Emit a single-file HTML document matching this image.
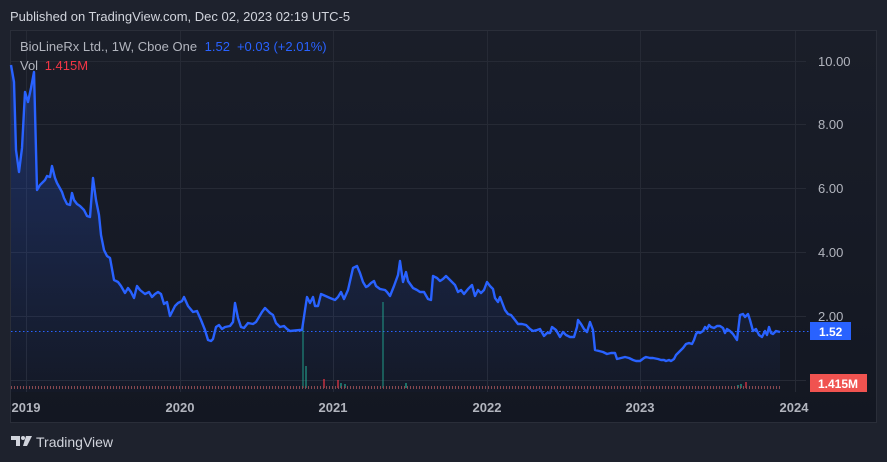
<!DOCTYPE html>
<html><head><meta charset="utf-8"><style>
html,body{margin:0;padding:0;background:#1e222d;width:887px;height:462px;overflow:hidden}
svg{display:block;font-family:"Liberation Sans",sans-serif}
</style></head><body>
<svg width="887" height="462" viewBox="0 0 887 462" xmlns="http://www.w3.org/2000/svg">
<defs>
<linearGradient id="bg" x1="0" y1="0" x2="0" y2="1"><stop offset="0" stop-color="#1a1e29"/><stop offset="1" stop-color="#131722"/></linearGradient>
<linearGradient id="ar" x1="0" y1="0" x2="0" y2="1"><stop offset="0" stop-color="#2962ff" stop-opacity="0.28"/><stop offset="1" stop-color="#2962ff" stop-opacity="0.02"/></linearGradient>
</defs>
<rect width="887" height="462" fill="#1e222d"/>
<text x="10" y="21" font-size="13" fill="#d1d4dc">Published on TradingView.com, Dec 02, 2023 02:19 UTC-5</text>
<rect x="10.5" y="30.5" width="866" height="392" fill="url(#bg)" stroke="#2a2e39"/>
<g stroke="#262a35" stroke-width="1">
<line x1="11" y1="61.5" x2="806" y2="61.5"/><line x1="11" y1="124.5" x2="806" y2="124.5"/>
<line x1="11" y1="188.5" x2="806" y2="188.5"/><line x1="11" y1="252.5" x2="806" y2="252.5"/>
<line x1="11" y1="316.5" x2="806" y2="316.5"/><line x1="11" y1="380.5" x2="806" y2="380.5"/>
<line x1="26.5" y1="31" x2="26.5" y2="392"/><line x1="180.5" y1="31" x2="180.5" y2="392"/>
<line x1="333.5" y1="31" x2="333.5" y2="392"/><line x1="487.5" y1="31" x2="487.5" y2="392"/>
<line x1="640.5" y1="31" x2="640.5" y2="392"/><line x1="795.5" y1="31" x2="795.5" y2="392"/>
</g>
<path fill="url(#ar)" stroke="none" d="M11,65 L14,82 L16,150 L19,172 L22,148 L25,92 L28,102 L31,88 L34,72 L37,190 L40,185 L43,182 L45,180 L47,176 L50,177 L52,166 L55,178 L57,183 L62,192 L64,198 L67,204 L70,205 L72,193 L74,200 L77,204 L80,206 L84,210 L87,216 L90,217 L93,178 L96,200 L99,215 L101,235 L104,250 L107,256 L110,258 L114,280 L118,282 L121,286 L125,293 L128,288 L131,292 L134,298 L137,286 L140,290 L145,294 L149,292 L152,297 L155,294 L158,292 L161,294 L164,304 L167,302 L170,316 L175,306 L178,303 L182,301 L184,297 L188,306 L193,312 L197,311 L201,320 L205,330 L208,340 L211,341 L213,339 L216,327 L219,325 L222,329 L225,327 L230,326 L233,322 L235,303 L238,318 L241,327 L244,328 L248,323 L253,324 L256,322 L262,312 L265,308 L270,313 L273,315 L276,323 L280,327 L284,326 L287,329 L290,331 L300,330 L302,330 L305,310 L307,297 L310,303 L313,297 L315,306 L318,306 L321,294 L330,298 L335,300 L338,297 L341,292 L344,299 L348,290 L353,268 L357,266 L360,273 L363,282 L366,287 L368,286 L371,283 L374,281 L376,286 L380,289 L385,290 L387,292 L390,296 L394,286 L398,275 L400,261 L403,282 L406,272 L408,281 L413,288 L417,290 L420,292 L424,292 L428,299 L431,300 L433,276 L437,278 L440,281 L443,279 L446,276 L450,280 L455,285 L458,292 L461,290 L464,294 L468,289 L472,285 L475,296 L478,290 L481,293 L484,290 L487,282 L490,286 L493,289 L495,298 L498,302 L500,297 L505,310 L508,314 L511,315 L515,320 L518,324 L522,324 L526,325 L530,329 L533,331 L537,330 L540,329 L544,336 L547,333 L550,333 L552,327 L556,330 L560,337 L563,332 L566,335 L570,337 L574,337 L577,327 L578,320 L581,324 L584,329 L587,332 L590,322 L593,330 L595,350 L599,351 L603,352 L607,354 L611,353 L615,353 L617,359 L621,358 L625,357 L629,358 L633,360 L636,361 L640,361 L644,358 L646,357 L650,358 L653,358 L658,359 L661,360 L664,360 L666,361 L669,360 L671,361 L674,359 L676,355 L679,352 L683,348 L686,344 L689,343 L692,344 L694,340 L696,334 L698,332 L700,333 L703,331 L705,327 L707,329 L709,325 L711,327 L714,328 L717,326 L720,326 L723,328 L725,333 L727,329 L730,331 L733,334 L737,340 L740,315 L743,314 L745,317 L748,314 L750,320 L753,331 L756,329 L759,335 L762,337 L765,331 L767,335 L769,327 L771,333 L773,334 L776,331 L780,332 L780,392 L11,392 Z"/>
<line x1="11" y1="331.5" x2="810" y2="331.5" stroke="#2962ff" stroke-dasharray="1.5 2.5" stroke-width="1"/>
<g stroke-width="1.5">
<line x1="303" y1="388" x2="303" y2="325" stroke="#22ab94" stroke-opacity="0.6"/>
<line x1="306" y1="388" x2="306" y2="366" stroke="#22ab94" stroke-opacity="0.7"/>
<line x1="383" y1="388" x2="383" y2="302" stroke="#22ab94" stroke-opacity="0.6"/>
<line x1="324" y1="388" x2="324" y2="379" stroke="#f23645" stroke-opacity="0.8"/>
<line x1="338" y1="388" x2="338" y2="380" stroke="#f23645" stroke-opacity="0.8"/>
<line x1="341" y1="388" x2="341" y2="383" stroke="#22ab94" stroke-opacity="0.8"/>
<line x1="345" y1="388" x2="345" y2="384" stroke="#22ab94" stroke-opacity="0.8"/>
<line x1="406" y1="388" x2="406" y2="383" stroke="#22ab94" stroke-opacity="0.8"/>
<line x1="746" y1="388" x2="746" y2="382" stroke="#f23645" stroke-opacity="0.8"/>
<line x1="741" y1="388" x2="741" y2="384" stroke="#22ab94" stroke-opacity="0.8"/>
<line x1="738" y1="388" x2="738" y2="385" stroke="#22ab94" stroke-opacity="0.8"/>
</g>
<line x1="11" y1="387.5" x2="780" y2="387.5" stroke="#8a4a50" stroke-dasharray="1 2" stroke-width="3"/>
<path fill="none" stroke="#2962ff" stroke-width="2.4" stroke-linejoin="round" d="M11,65 L14,82 L16,150 L19,172 L22,148 L25,92 L28,102 L31,88 L34,72 L37,190 L40,185 L43,182 L45,180 L47,176 L50,177 L52,166 L55,178 L57,183 L62,192 L64,198 L67,204 L70,205 L72,193 L74,200 L77,204 L80,206 L84,210 L87,216 L90,217 L93,178 L96,200 L99,215 L101,235 L104,250 L107,256 L110,258 L114,280 L118,282 L121,286 L125,293 L128,288 L131,292 L134,298 L137,286 L140,290 L145,294 L149,292 L152,297 L155,294 L158,292 L161,294 L164,304 L167,302 L170,316 L175,306 L178,303 L182,301 L184,297 L188,306 L193,312 L197,311 L201,320 L205,330 L208,340 L211,341 L213,339 L216,327 L219,325 L222,329 L225,327 L230,326 L233,322 L235,303 L238,318 L241,327 L244,328 L248,323 L253,324 L256,322 L262,312 L265,308 L270,313 L273,315 L276,323 L280,327 L284,326 L287,329 L290,331 L300,330 L302,330 L305,310 L307,297 L310,303 L313,297 L315,306 L318,306 L321,294 L330,298 L335,300 L338,297 L341,292 L344,299 L348,290 L353,268 L357,266 L360,273 L363,282 L366,287 L368,286 L371,283 L374,281 L376,286 L380,289 L385,290 L387,292 L390,296 L394,286 L398,275 L400,261 L403,282 L406,272 L408,281 L413,288 L417,290 L420,292 L424,292 L428,299 L431,300 L433,276 L437,278 L440,281 L443,279 L446,276 L450,280 L455,285 L458,292 L461,290 L464,294 L468,289 L472,285 L475,296 L478,290 L481,293 L484,290 L487,282 L490,286 L493,289 L495,298 L498,302 L500,297 L505,310 L508,314 L511,315 L515,320 L518,324 L522,324 L526,325 L530,329 L533,331 L537,330 L540,329 L544,336 L547,333 L550,333 L552,327 L556,330 L560,337 L563,332 L566,335 L570,337 L574,337 L577,327 L578,320 L581,324 L584,329 L587,332 L590,322 L593,330 L595,350 L599,351 L603,352 L607,354 L611,353 L615,353 L617,359 L621,358 L625,357 L629,358 L633,360 L636,361 L640,361 L644,358 L646,357 L650,358 L653,358 L658,359 L661,360 L664,360 L666,361 L669,360 L671,361 L674,359 L676,355 L679,352 L683,348 L686,344 L689,343 L692,344 L694,340 L696,334 L698,332 L700,333 L703,331 L705,327 L707,329 L709,325 L711,327 L714,328 L717,326 L720,326 L723,328 L725,333 L727,329 L730,331 L733,334 L737,340 L740,315 L743,314 L745,317 L748,314 L750,320 L753,331 L756,329 L759,335 L762,337 L765,331 L767,335 L769,327 L771,333 L773,334 L776,331 L780,332"/>
<text x="20" y="51" font-size="13" fill="#b2b5be">BioLineRx Ltd., 1W, Cboe One <tspan fill="#2962ff" dx="4">1.52</tspan><tspan fill="#2962ff" dx="7">+0.03 (+2.01%)</tspan></text>
<text x="20" y="70" font-size="13" fill="#b2b5be">Vol <tspan fill="#f23645" dx="3">1.415M</tspan></text>
<g font-size="13" fill="#b2b5be">
<text x="818" y="66">10.00</text><text x="818" y="129">8.00</text><text x="818" y="193">6.00</text>
<text x="818" y="257">4.00</text><text x="818" y="321">2.00</text>
</g>
<rect x="810" y="322" width="41" height="18" fill="#2962ff"/>
<text x="819" y="336" font-size="12" font-weight="bold" fill="#fff">1.52</text>
<rect x="810" y="374" width="57" height="18" fill="#f05350"/>
<text x="818" y="388" font-size="12" font-weight="bold" fill="#fff">1.415M</text>
<g font-size="13" font-weight="bold" fill="#b2b5be" text-anchor="middle">
<text x="26" y="412">2019</text><text x="180" y="412">2020</text><text x="333" y="412">2021</text>
<text x="487" y="412">2022</text><text x="640" y="412">2023</text><text x="794" y="412">2024</text>
</g>
<g fill="#d1d4dc">
<path d="M11,436 h9 v10 h-4 v-6 h-5 z"/>
<circle cx="23" cy="438" r="2"/>
<path d="M26,436 h6 l-5,10 h-4 z"/>
</g>
<text x="36" y="447" font-size="14" fill="#d1d4dc">TradingView</text>
</svg>
</body></html>
